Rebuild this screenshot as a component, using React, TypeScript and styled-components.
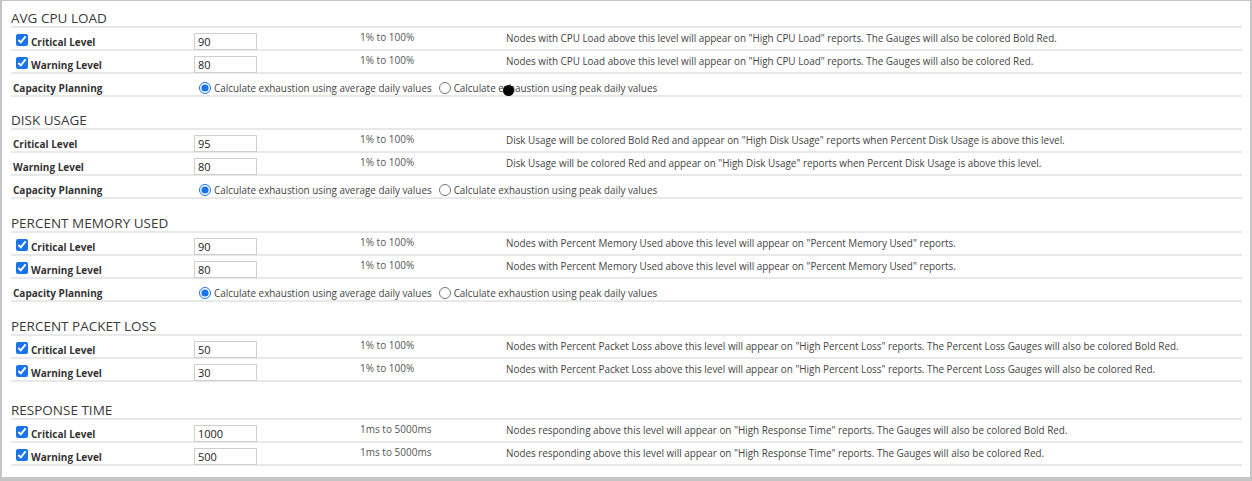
import React from "react";
import styled, { createGlobalStyle } from "styled-components";

const Global = createGlobalStyle`
  html, body { margin: 0; padding: 0; background: #ffffff; }
  body { font-family: "Open Sans", "Liberation Sans", Arial, sans-serif; }
`;

const Frame = styled.div`
  position: relative;
  box-sizing: border-box;
  width: 1252px;
  height: 481px;
  border-style: solid;
  border-color: #c4c4c4;
  border-width: 1px 2px 4px 2px;
  padding: 0 8px 0 9px;
  background: #fff;
  overflow: hidden;
`;

const Section = styled.section<{ $gap: number }>`
  margin-top: ${(p) => p.$gap}px;
`;

const Heading = styled.h2`
  margin: 0;
  padding: 9px 0 0 0;
  font-size: 13.5px;
  line-height: 16px;
  font-weight: 400;
  color: #3a3a3a;
  text-transform: uppercase;
  border-bottom: 2px solid #e8e8e8;
`;

const Row = styled.div`
  display: grid;
  grid-template-columns: 183px 166px 146px 1fr;
  grid-template-rows: 21px;
  align-items: start;
  height: 21px;
  border-bottom: 2px solid #e8e8e8;
`;

const LabelCell = styled.label<{ $check?: boolean }>`
  display: flex;
  align-items: flex-start;
  padding-top: 7px;
  padding-left: ${(p) => (p.$check ? 5 : 2)}px;
  font-size: 10px;
  line-height: 14px;
  font-weight: 700;
  color: #333;
`;

const Check = styled.input`
  width: 12px;
  height: 12px;
  margin: -1px 3px 0 0;
  accent-color: #1a73e8;
`;

const InputCell = styled.div`
  padding-top: 5px;
`;

const NumInput = styled.input`
  display: block;
  box-sizing: border-box;
  width: 63px;
  height: 17px;
  border: 1px solid #cfcfcf;
  padding: 0 3px;
  font-family: "Open Sans", "Liberation Sans", Arial, sans-serif;
  font-size: 11px;
  color: #222;
  outline: none;
`;

const Range = styled.div`
  padding-top: 2px;
  font-size: 10px;
  line-height: 14px;
  color: #555;
`;

const Desc = styled.div`
  padding-top: 3px;
  font-size: 9.9px;
  line-height: 14px;
  color: #444;
  white-space: nowrap;
`;

const RadioGroup = styled.div`
  grid-column: 2 / 5;
  display: flex;
  align-items: center;
  padding-top: 7px;
  font-size: 9.9px;
  line-height: 14px;
  color: #444;
`;

const RadioLabel = styled.label`
  display: flex;
  align-items: center;
  margin-right: 2px;
`;

const Radio = styled.input`
  width: 12px;
  height: 12px;
  margin: 0 3px 0 5px;
  accent-color: #1a73e8;
`;

const Dot = styled.div`
  position: absolute;
  left: 501px;
  top: 84px;
  width: 11px;
  height: 11px;
  border-radius: 50%;
  background: #000;
`;

type Level = { name: string; value: string; range: string; desc: string };
type Sec = { title: string; check: boolean; levels: Level[]; capacity: boolean; gap: number };

const pct = "1% to 100%";
const ms = "1ms to 5000ms";

const sections: Sec[] = [
  {
    title: "Avg CPU Load",
    check: true,
    capacity: true,
    gap: 0,
    levels: [
      { name: "Critical Level", value: "90", range: pct, desc: 'Nodes with CPU Load above this level will appear on "High CPU Load" reports. The Gauges will also be colored Bold Red.' },
      { name: "Warning Level", value: "80", range: pct, desc: 'Nodes with CPU Load above this level will appear on "High CPU Load" reports. The Gauges will also be colored Red.' },
    ],
  },
  {
    title: "Disk Usage",
    check: false,
    capacity: true,
    gap: 6,
    levels: [
      { name: "Critical Level", value: "95", range: pct, desc: 'Disk Usage will be colored Bold Red and appear on "High Disk Usage" reports when Percent Disk Usage is above this level.' },
      { name: "Warning Level", value: "80", range: pct, desc: 'Disk Usage will be colored Red and appear on "High Disk Usage" reports when Percent Disk Usage is above this level.' },
    ],
  },
  {
    title: "Percent Memory Used",
    check: true,
    capacity: true,
    gap: 7,
    levels: [
      { name: "Critical Level", value: "90", range: pct, desc: 'Nodes with Percent Memory Used above this level will appear on "Percent Memory Used" reports.' },
      { name: "Warning Level", value: "80", range: pct, desc: 'Nodes with Percent Memory Used above this level will appear on "Percent Memory Used" reports.' },
    ],
  },
  {
    title: "Percent Packet Loss",
    check: true,
    capacity: false,
    gap: 7,
    levels: [
      { name: "Critical Level", value: "50", range: pct, desc: 'Nodes with Percent Packet Loss above this level will appear on "High Percent Loss" reports. The Percent Loss Gauges will also be colored Bold Red.' },
      { name: "Warning Level", value: "30", range: pct, desc: 'Nodes with Percent Packet Loss above this level will appear on "High Percent Loss" reports. The Percent Loss Gauges will also be colored Red.' },
    ],
  },
  {
    title: "Response Time",
    check: true,
    capacity: false,
    gap: 11,
    levels: [
      { name: "Critical Level", value: "1000", range: ms, desc: 'Nodes responding above this level will appear on "High Response Time" reports. The Gauges will also be colored Bold Red.' },
      { name: "Warning Level", value: "500", range: ms, desc: 'Nodes responding above this level will appear on "High Response Time" reports. The Gauges will also be colored Red.' },
    ],
  },
];

export default function App() {
  return (
    <>
      <Global />
      <Frame>
        {sections.map((s, si) => (
          <Section key={s.title} $gap={s.gap}>
            <Heading>{s.title}</Heading>
            {s.levels.map((l) => (
              <Row key={l.name}>
                <LabelCell $check={s.check}>
                  {s.check && <Check type="checkbox" defaultChecked />}
                  {l.name}
                </LabelCell>
                <InputCell>
                  <NumInput type="text" defaultValue={l.value} />
                </InputCell>
                <Range>{l.range}</Range>
                <Desc>{l.desc}</Desc>
              </Row>
            ))}
            {s.capacity && (
              <Row>
                <LabelCell>Capacity Planning</LabelCell>
                <RadioGroup>
                  <RadioLabel>
                    <Radio type="radio" name={`cap-${si}`} defaultChecked />
                    Calculate exhaustion using average daily values
                  </RadioLabel>
                  <RadioLabel>
                    <Radio type="radio" name={`cap-${si}`} />
                    Calculate exhaustion using peak daily values
                  </RadioLabel>
                </RadioGroup>
              </Row>
            )}
          </Section>
        ))}
        <Dot />
      </Frame>
    </>
  );
}
